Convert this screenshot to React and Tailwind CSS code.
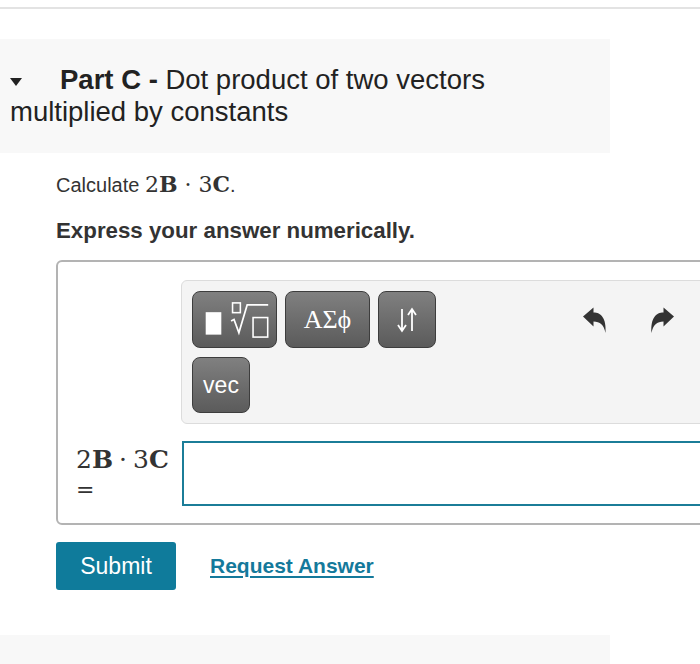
const sans = { fontFamily: '"Liberation Sans", Arial, sans-serif' };
const serif = { fontFamily: '"Liberation Serif", "Times New Roman", serif' };
const mathFont = { fontFamily: '"DejaVu Serif", "Liberation Serif", serif' };

function Math2B3C({ className, gap }) {
  return (
    <span className={className} style={mathFont}>
      2<b>B</b>
      <span className={gap}>·</span>
      3<b>C</b>
    </span>
  );
}

function ToolButton({ w, children }) {
  return (
    <div
      className={`flex h-[57px] ${w} items-center justify-center rounded-[8px] border-[1.5px] border-[#3d3d3d] bg-gradient-to-b from-[#808080] to-[#5b5b5b] text-white`}
    >
      {children}
    </div>
  );
}

function TemplateIcon() {
  return (
    <svg width="85" height="57" viewBox="0 0 85 57">
      <rect x="13" y="21" width="16" height="23" fill="#fff" />
      <rect x="40.5" y="11.5" width="8" height="10" fill="none" stroke="#fff" strokeWidth="1.6" />
      <path d="M39 30 L42 28.5 L47 42 L55.5 13.5 L77 13.5" fill="none" stroke="#fff" strokeWidth="1.8" />
      <rect x="61.5" y="26.5" width="15" height="20" fill="none" stroke="#fff" strokeWidth="1.6" />
    </svg>
  );
}

function ArrowsIcon() {
  return (
    <svg width="24" height="28" viewBox="0 0 24 28">
      <path d="M7 3 V24 M3 19 L7 25 L11 19" fill="none" stroke="#fff" strokeWidth="1.8" />
      <path d="M17 25 V4 M13 9 L17 3 L21 9" fill="none" stroke="#fff" strokeWidth="1.8" />
    </svg>
  );
}

function UndoIcon({ flip }) {
  return (
    <svg
      width="24"
      height="28"
      viewBox="0 0 24 28"
      className={flip ? "-scale-x-100" : ""}
    >
      <path
        d="M0 10.5 L10.5 1.5 L10.5 6.5 C18 6.5 23.5 12 22.5 27 C21 19 17 15.5 10.5 15.5 L10.5 20.5 Z"
        fill="#333"
      />
    </svg>
  );
}

export default function App() {
  return (
    <div className="relative h-[664px] w-[700px] overflow-hidden bg-white text-[#333]" style={sans}>
      <div className="mt-[7px] h-[2px] bg-[#e3e3e3]" />

      <div className="mt-[30px] w-[610px] bg-[#f8f8f8] py-[25px] pl-[10px] pr-[10px] text-[27.5px] leading-[32px] text-[#222]">
        <span className="mr-[38px] inline-block h-0 w-0 border-x-[6px] border-t-[8px] border-x-transparent border-t-[#222] align-middle" />
        <b>Part C -</b> Dot product of two vectors
        <br />
        multiplied by constants
      </div>

      <div className="pl-[56px]">
        <div className="mt-[18px] h-[28px] text-[20px] leading-[28px]">
          Calculate <Math2B3C className="text-[22px] leading-none" gap="mx-[7px]" />.
        </div>
        <div className="mt-[18px] h-[28px] text-[22.3px] font-bold leading-[28px]">
          Express your answer numerically.
        </div>

        <div className="mt-[15px] h-[265px] w-[680px] rounded-[6px] border-2 border-[#b3b3b3] pt-[18px]">
          <div className="ml-[123px] flex h-[144px] rounded-[6px] border border-[#dcdcdc] bg-[#f4f4f4] pl-[10px] pt-[10px]">
            <div className="flex flex-col gap-[9px]">
              <div className="flex gap-[8px]">
                <ToolButton w="w-[85px]">
                  <TemplateIcon />
                </ToolButton>
                <ToolButton w="w-[85px]">
                  <span className="text-[26px]" style={serif}>ΑΣϕ</span>
                </ToolButton>
                <ToolButton w="w-[58px]">
                  <ArrowsIcon />
                </ToolButton>
              </div>
              <div className="flex">
                <div className="flex h-[56px] w-[58px] items-center justify-center rounded-[8px] border-[1.5px] border-[#3d3d3d] bg-gradient-to-b from-[#808080] to-[#5b5b5b] text-[23px] text-white">
                  vec
                </div>
              </div>
            </div>
            <div className="ml-[147px] mt-[15px] flex h-[28px] gap-[43px]">
              <UndoIcon />
              <UndoIcon flip />
            </div>
          </div>

          <div className="mt-[17px] flex pl-[18px]">
            <div className="w-[106px] pt-[3px] text-[25px] leading-[31px]">
              <Math2B3C gap="mx-[6px]" />
              <div className="text-[22px] leading-[30px]" style={mathFont}>=</div>
            </div>
            <div className="h-[65px] flex-1 border-2 border-[#1b7d98] bg-white" />
          </div>
        </div>

        <div className="mt-[17px] flex items-center">
          <button className="h-[48px] w-[120px] rounded-[3px] bg-[#0f7b9b] text-[23px] text-white">
            Submit
          </button>
          <span className="ml-[34px] text-[21px] font-bold text-[#14799b] underline underline-offset-[3px]">
            Request Answer
          </span>
        </div>
      </div>

      <div className="mt-[45px] h-[40px] w-[610px] bg-[#f8f8f8]" />
    </div>
  );
}
